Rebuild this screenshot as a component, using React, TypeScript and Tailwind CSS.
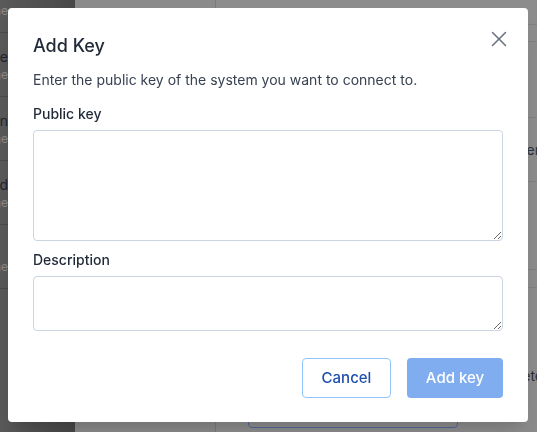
import { X } from "lucide-react";

const sideItems = [
  { title: "Home", sub: "None" },
  { title: "Prime", sub: "None" },
  { title: "Main", sub: "None" },
  { title: "Advanced", sub: "None" },
  { title: "", sub: "None" },
];

function Backdrop() {
  return (
    <div className="flex h-[432px] w-full overflow-hidden font-['Inter',sans-serif]">
      <aside className="w-[75px] shrink-0 bg-gradient-to-r from-[#5a5a5a] to-[#474747]">
        <div className="-mt-[31px]">
          {sideItems.map((item, i) => (
            <div key={i} className="flex h-[64px] flex-col items-end justify-center border-b border-[#4a4a4a] pr-[67px]">
              <span className="text-sm text-[#1f2530]">{item.title || "\u00a0"}</span>
              <span className="text-xs text-[#8a8a8a]">{item.sub}</span>
            </div>
          ))}
        </div>
      </aside>
      <div className="w-[141px] shrink-0 border-r border-[#7a7a7a] bg-[#8a8a8a]" />
      <main className="flex-1 bg-[#8c8c8c]">
        <div className="h-[25px] border-b border-[#808080]" />
        <div className="h-[17px] border-b border-[#808080]" />
        <div className="h-[76px] border-b border-[#808080]" />
        <div className="flex h-[64px] items-center justify-end border-b border-[#808080] text-sm text-[#2a2f38]">
          <span className="-mr-[6px]">Open</span>
        </div>
        <div className="h-[88px] border-b border-[#808080]" />
        <div className="h-[18px] border-b border-[#808080]" />
        <div className="flex h-[100px] justify-end pt-[78px] text-sm leading-5 text-[#2a2f38]">
          <span className="-mr-[6px]">Delete</span>
        </div>
        <div className="ml-[32px] h-[40px] w-[210px] rounded border border-[#55679a]" />
      </main>
    </div>
  );
}

export default function App() {
  return (
    <div className="relative h-[432px] w-[537px] overflow-hidden">
      <Backdrop />
      <div className="fixed inset-0 pt-[8px] pl-[8px] font-['Inter',sans-serif]">
        <div className="relative w-[520px] rounded bg-white px-[25px] pt-[24px] pb-[24px] shadow-xl">
          <button className="absolute right-[16px] top-[18px] text-[#6b7280]" aria-label="Close">
            <X size={26} strokeWidth={1.4} />
          </button>
          <h2 className="text-lg leading-7 font-medium text-[#1f2937]">Add Key</h2>
          <p className="mt-[10px] text-sm leading-5 text-[#374151]">
            Enter the public key of the system you want to connect to.
          </p>
          <label className="mt-[14px] block text-sm leading-5 font-medium text-[#1f2937]">Public key</label>
          <textarea className="mt-[6px] block h-[111px] w-full rounded-sm border border-[#cbd5e1] bg-white px-2 py-1 text-sm outline-none" />
          <label className="mt-[9px] block text-sm leading-5 font-medium text-[#1f2937]">Description</label>
          <textarea className="mt-[6px] block h-[55px] w-full rounded-sm border border-[#cbd5e1] bg-white px-2 py-1 text-sm outline-none" />
          <div className="mt-[27px] flex justify-end gap-4">
            <button className="h-10 w-[89px] rounded border border-[#93c5fd] bg-white text-[15px] font-medium text-[#1e4fae]">
              Cancel
            </button>
            <button disabled className="h-10 w-[96px] rounded bg-[#80adf0] text-[15px] font-medium text-white">
              Add key
            </button>
          </div>
        </div>
      </div>
    </div>
  );
}
